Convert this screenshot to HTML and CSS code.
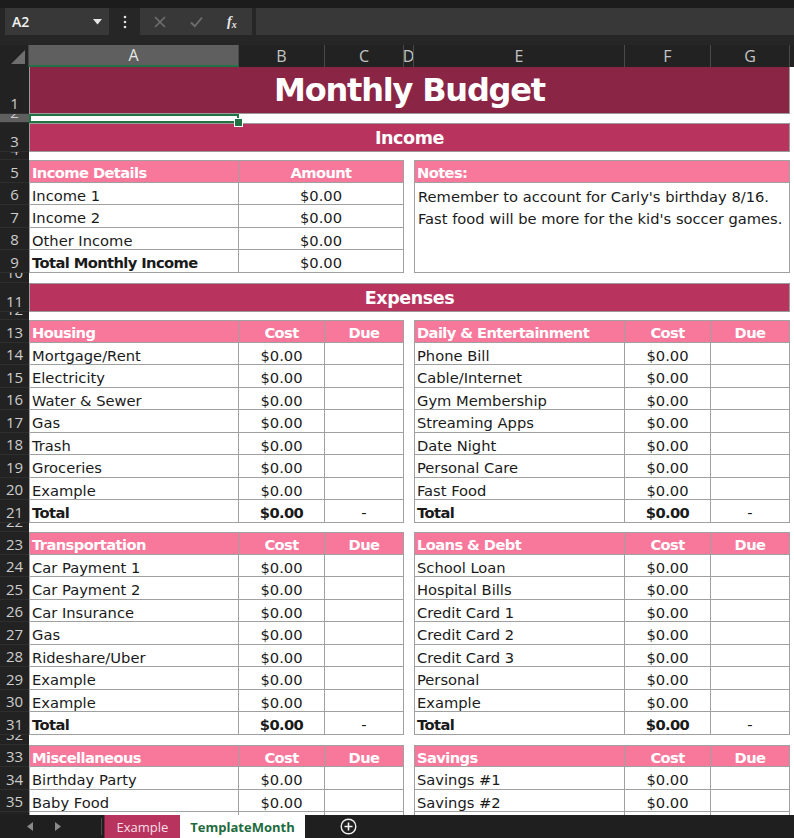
FILE: index.html
```html
<!DOCTYPE html>
<html lang="en">
<head>
<meta charset="utf-8">
<title>Monthly Budget</title>
<link rel="stylesheet" href="styles.css">
</head>
<body>
<div class="app">
  <div class="topbar">
    <div class="namebox"><span>A2</span><svg width="9" height="6" viewBox="0 0 9 6"><path d="M0 0 H9 L4.5 5.5 Z" fill="#e6e6e6"/></svg></div>
    <div class="vdots"><svg width="4" height="14" viewBox="0 0 4 14"><circle cx="2" cy="2" r="1.3" fill="#e0e0e0"/><circle cx="2" cy="7" r="1.3" fill="#e0e0e0"/><circle cx="2" cy="12" r="1.3" fill="#e0e0e0"/></svg></div>
    <div class="fxgroup">
      <svg class="ico" width="12" height="12" viewBox="0 0 12 12"><path d="M1 1 L11 11 M11 1 L1 11" stroke="#6f6f6f" stroke-width="1.6"/></svg>
      <svg class="ico" width="13" height="12" viewBox="0 0 13 12"><path d="M1 6.5 L4.8 10.2 L12 1.5" stroke="#6f6f6f" stroke-width="1.8" fill="none"/></svg>
      <span class="fx"><i>f</i><sub>x</sub></span>
    </div>
    <div class="formula"></div>
  </div>

  <div class="sheet">
    <div class="row colhead">
      <div class="corner"><svg width="16" height="16" viewBox="0 0 16 16"><path d="M15 1 V15 H1 Z" fill="#6e6e6e"/></svg></div>
      <div class="ch sel">A</div><div class="ch">B</div><div class="ch">C</div><div class="ch">D</div><div class="ch">E</div><div class="ch">F</div><div class="ch">G</div><div class="ch last"></div>
    </div>

    <div class="row r47"><div class="rh"><span>1</span></div><div class="title">Monthly Budget</div></div>
    <div class="row r9"><div class="rh sel"><span>2</span></div><div class="selcell"></div></div>
    <div class="row r29"><div class="rh"><span>3</span></div><div class="banner">Income</div></div>
    <div class="row r8"><div class="rh"><span>4</span></div></div>

    <div class="row"><div class="rh"><span>5</span></div><div class="c l t hd">Income Details</div><div class="c t hd s2 ctr">Amount</div><div class="c l t hd e s3">Notes:</div></div>
    <div class="row"><div class="rh"><span>6</span></div><div class="c l">Income 1</div><div class="c s2 ctr">$0.00</div><div class="c l e s3 note">Remember to account for Carly's birthday 8/16.</div></div>
    <div class="row"><div class="rh"><span>7</span></div><div class="c l">Income 2</div><div class="c s2 ctr">$0.00</div><div class="c l e s3 note">Fast food will be more for the kid's soccer games.</div></div>
    <div class="row"><div class="rh"><span>8</span></div><div class="c l">Other Income</div><div class="c s2 ctr">$0.00</div><div class="c l e s3 note"></div></div>
    <div class="row"><div class="rh"><span>9</span></div><div class="c l b">Total Monthly Income</div><div class="c s2 ctr">$0.00</div><div class="c l e s3"></div></div>
    <div class="row r10"><div class="rh"><span>10</span></div></div>
    <div class="row r29"><div class="rh"><span>11</span></div><div class="banner">Expenses</div></div>
    <div class="row r8"><div class="rh"><span>12</span></div></div>

    <div class="row"><div class="rh"><span>13</span></div><div class="c l t hd">Housing</div><div class="c t hd ctr">Cost</div><div class="c t hd ctr">Due</div><div class="c l t hd e">Daily &amp; Entertainment</div><div class="c t hd ctr">Cost</div><div class="c t hd ctr">Due</div></div>
    <div class="row"><div class="rh"><span>14</span></div><div class="c l">Mortgage/Rent</div><div class="c ctr">$0.00</div><div class="c"></div><div class="c l e">Phone Bill</div><div class="c ctr">$0.00</div><div class="c"></div></div>
    <div class="row"><div class="rh"><span>15</span></div><div class="c l">Electricity</div><div class="c ctr">$0.00</div><div class="c"></div><div class="c l e">Cable/Internet</div><div class="c ctr">$0.00</div><div class="c"></div></div>
    <div class="row"><div class="rh"><span>16</span></div><div class="c l">Water &amp; Sewer</div><div class="c ctr">$0.00</div><div class="c"></div><div class="c l e">Gym Membership</div><div class="c ctr">$0.00</div><div class="c"></div></div>
    <div class="row"><div class="rh"><span>17</span></div><div class="c l">Gas</div><div class="c ctr">$0.00</div><div class="c"></div><div class="c l e">Streaming Apps</div><div class="c ctr">$0.00</div><div class="c"></div></div>
    <div class="row"><div class="rh"><span>18</span></div><div class="c l">Trash</div><div class="c ctr">$0.00</div><div class="c"></div><div class="c l e">Date Night</div><div class="c ctr">$0.00</div><div class="c"></div></div>
    <div class="row"><div class="rh"><span>19</span></div><div class="c l">Groceries</div><div class="c ctr">$0.00</div><div class="c"></div><div class="c l e">Personal Care</div><div class="c ctr">$0.00</div><div class="c"></div></div>
    <div class="row"><div class="rh"><span>20</span></div><div class="c l">Example</div><div class="c ctr">$0.00</div><div class="c"></div><div class="c l e">Fast Food</div><div class="c ctr">$0.00</div><div class="c"></div></div>
    <div class="row"><div class="rh"><span>21</span></div><div class="c l b">Total</div><div class="c ctr b">$0.00</div><div class="c ctr">-</div><div class="c l e b">Total</div><div class="c ctr b">$0.00</div><div class="c ctr">-</div></div>
    <div class="row r9h"><div class="rh"><span>22</span></div></div>

    <div class="row"><div class="rh"><span>23</span></div><div class="c l t hd">Transportation</div><div class="c t hd ctr">Cost</div><div class="c t hd ctr">Due</div><div class="c l t hd e">Loans &amp; Debt</div><div class="c t hd ctr">Cost</div><div class="c t hd ctr">Due</div></div>
    <div class="row"><div class="rh"><span>24</span></div><div class="c l">Car Payment 1</div><div class="c ctr">$0.00</div><div class="c"></div><div class="c l e">School Loan</div><div class="c ctr">$0.00</div><div class="c"></div></div>
    <div class="row"><div class="rh"><span>25</span></div><div class="c l">Car Payment 2</div><div class="c ctr">$0.00</div><div class="c"></div><div class="c l e">Hospital Bills</div><div class="c ctr">$0.00</div><div class="c"></div></div>
    <div class="row"><div class="rh"><span>26</span></div><div class="c l">Car Insurance</div><div class="c ctr">$0.00</div><div class="c"></div><div class="c l e">Credit Card 1</div><div class="c ctr">$0.00</div><div class="c"></div></div>
    <div class="row"><div class="rh"><span>27</span></div><div class="c l">Gas</div><div class="c ctr">$0.00</div><div class="c"></div><div class="c l e">Credit Card 2</div><div class="c ctr">$0.00</div><div class="c"></div></div>
    <div class="row"><div class="rh"><span>28</span></div><div class="c l">Rideshare/Uber</div><div class="c ctr">$0.00</div><div class="c"></div><div class="c l e">Credit Card 3</div><div class="c ctr">$0.00</div><div class="c"></div></div>
    <div class="row"><div class="rh"><span>29</span></div><div class="c l">Example</div><div class="c ctr">$0.00</div><div class="c"></div><div class="c l e">Personal</div><div class="c ctr">$0.00</div><div class="c"></div></div>
    <div class="row"><div class="rh"><span>30</span></div><div class="c l">Example</div><div class="c ctr">$0.00</div><div class="c"></div><div class="c l e">Example</div><div class="c ctr">$0.00</div><div class="c"></div></div>
    <div class="row"><div class="rh"><span>31</span></div><div class="c l b">Total</div><div class="c ctr b">$0.00</div><div class="c ctr">-</div><div class="c l e b">Total</div><div class="c ctr b">$0.00</div><div class="c ctr">-</div></div>
    <div class="row r10s"><div class="rh"><span>32</span></div></div>

    <div class="row"><div class="rh"><span>33</span></div><div class="c l t hd">Miscellaneous</div><div class="c t hd ctr">Cost</div><div class="c t hd ctr">Due</div><div class="c l t hd e">Savings</div><div class="c t hd ctr">Cost</div><div class="c t hd ctr">Due</div></div>
    <div class="row"><div class="rh"><span>34</span></div><div class="c l">Birthday Party</div><div class="c ctr">$0.00</div><div class="c"></div><div class="c l e">Savings #1</div><div class="c ctr">$0.00</div><div class="c"></div></div>
    <div class="row"><div class="rh"><span>35</span></div><div class="c l">Baby Food</div><div class="c ctr">$0.00</div><div class="c"></div><div class="c l e">Savings #2</div><div class="c ctr">$0.00</div><div class="c"></div></div>
    <div class="row"><div class="rh"><span>36</span></div><div class="c l"></div><div class="c ctr"></div><div class="c"></div><div class="c l e"></div><div class="c ctr"></div><div class="c"></div></div>
  </div>

  <div class="tabbar">
    <div class="navs">
      <svg width="6" height="9" viewBox="0 0 6 9"><path d="M6 0 V9 L0 4.5 Z" fill="#8a8a8a"/></svg>
      <svg width="6" height="9" viewBox="0 0 6 9"><path d="M0 0 V9 L6 4.5 Z" fill="#8a8a8a"/></svg>
    </div>
    <div class="tab ex">Example</div>
    <div class="tab act">TemplateMonth</div>
    <div class="addtab"><svg width="17" height="17" viewBox="0 0 17 17"><circle cx="8.5" cy="8.5" r="7.3" fill="none" stroke="#f0f0f0" stroke-width="1.4"/><path d="M8.5 4.5 V12.5 M4.5 8.5 H12.5" stroke="#f0f0f0" stroke-width="1.6"/></svg></div>
  </div>
</div>
</body>
</html>
```

FILE: styles.css
```css
* { box-sizing: border-box; margin: 0; padding: 0; }
html, body { width: 794px; height: 838px; overflow: hidden; background: #1f1f1f; }
body { font-family: "DejaVu Sans", sans-serif; }

.app { display: flex; flex-direction: column; height: 838px; }

/* formula bar */
.topbar {
  height: 45px; flex: none; background: #262626; border-top: 8px solid #1c1c1c;
  display: flex; align-items: flex-start; padding-left: 5px;
}
.namebox {
  width: 104px; height: 27px; background: #383838; display: flex; align-items: center;
  justify-content: space-between; padding: 0 7px 0 7px;
  color: #f2f2f2; font: 600 14px "Open Sans", sans-serif;
}
.vdots { width: 31px; height: 27px; display: flex; align-items: center; justify-content: center; }
.fxgroup {
  width: 112px; height: 27px; background: #383838; display: flex; align-items: center;
  padding-left: 14px; gap: 24px;
}
.fx { font: italic bold 14px "Liberation Serif", serif; color: #e8e8e8; display: flex; align-items: baseline; }
.fx sub { font-size: 10px; font-style: italic; vertical-align: baseline; position: relative; top: 2px; }
.formula { flex: 1; height: 27px; margin-left: 4px; background: #383838; }

/* sheet */
.sheet { height: 770px; flex: none; overflow: hidden; display: flex; flex-direction: column; background: #fff; }
.row {
  display: grid; flex: none;
  grid-template-columns: 29px 210px 86px 79px 10px 211px 86px 79px 4px;
  height: 22.5px;
}
.r47 { height: 47px; }
.r9 { height: 9px; }
.r29 { height: 29px; }
.r8 { height: 8px; }
.r10 { height: 10.5px; }
.r9h { height: 9.5px; }
.r10s { height: 10px; }

.colhead { height: 22px; background: #222; }
.corner { display: flex; align-items: flex-end; justify-content: flex-end; padding: 0 2px 2px 0; border-right: 1px solid #444; }
.ch {
  display: flex; align-items: center; justify-content: center; overflow: hidden;
  color: #c4c4c4; font: 16px "Open Sans", sans-serif; border-right: 1px solid #4a4a4a;
}
.ch.sel { background: #5f5f5f; border-bottom: 2px solid #217346; color: #e6e6e6; }
.ch.last { border-right: none; }

.rh {
  background: #222; color: #cdcdcd; font: 15px/20px "Open Sans", sans-serif;
  display: flex; align-items: flex-end; justify-content: center; overflow: hidden;
  border-bottom: 1px solid #2e2e2e;
}
.rh.sel { background: #5f5f5f; }

.title {
  grid-column: 2 / span 7; background: #8b2546; color: #fff;
  font: bold 32px "DejaVu Sans", sans-serif; letter-spacing: -1.2px;
  display: flex; align-items: center; justify-content: center;
  border: 1px solid #9a9a9a; border-top: none;
}
.banner {
  grid-column: 2 / span 7; background: #b8345f; color: #fff;
  font: bold 17.5px "DejaVu Sans", sans-serif; letter-spacing: -0.4px;
  display: flex; align-items: center; justify-content: center;
  border: 1px solid #9a9a9a;
}
.selcell { grid-column: 2; position: relative; box-shadow: inset 0 0 0 2px #217346; z-index: 2; }
.selcell::after {
  content: ""; position: absolute; right: -4px; bottom: -4px; width: 7px; height: 7px;
  background: #217346; border: 1px solid #fff;
}

.c {
  display: flex; align-items: flex-end; padding: 0 3px 0.5px 2px; min-width: 0;
  border-right: 1px solid #a0a0a0; border-bottom: 1px solid #a0a0a0;
  font-size: 14.7px; line-height: 17px; color: #1a1a1a; white-space: nowrap;
}
.l { border-left: 1px solid #a0a0a0; }
.t { border-top: 1px solid #a0a0a0; }
.e { grid-column: 6; }
.s2 { grid-column-end: span 2; }
.e.s3 { grid-column: 6 / span 3; }
.hd { background: #f8789c; color: #fff; font-weight: bold; letter-spacing: -0.6px; }
.b { font-weight: bold; letter-spacing: -0.6px; }
.ctr { justify-content: center; padding-left: 0; padding-right: 0; }
.note { border-bottom: none; padding-left: 3px; }

/* sheet tabs */
.tabbar { height: 23px; flex: none; background: #1f1f1f; display: flex; align-items: stretch; }
.navs {
  width: 102px; display: flex; align-items: center; gap: 22px; padding-left: 27px;
  border-right: 1px solid #4a4a4a; margin: 3px 0;
}
.tab { display: flex; align-items: center; justify-content: center; font: 13px "Open Sans", sans-serif; }
.tab.ex { width: 76px; margin-left: 2px; background: #b8345f; color: #f6dfe6; border-left: 1px solid #7a2340; }
.tab.act { width: 125px; background: #fff; color: #1d6b3d; font-weight: bold; }
.addtab { width: 86px; display: flex; align-items: center; justify-content: center; }
```
